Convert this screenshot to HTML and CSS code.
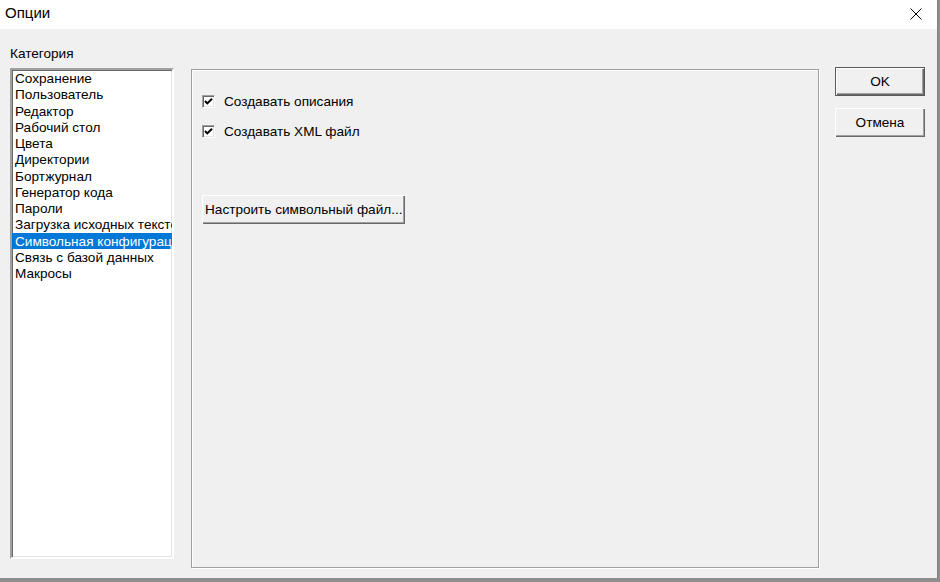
FILE: index.html
```html
<!DOCTYPE html>
<html lang="ru">
<head>
<meta charset="utf-8">
<title>Опции</title>
<link rel="stylesheet" href="styles.css">
</head>
<body>
<div class="window">
  <div class="titlebar">
    <span class="title">Опции</span>
    <button class="close" aria-label="Закрыть">
      <svg width="12" height="12" viewBox="0 0 12 12"><path d="M0.5 0.5 L11.5 11.5 M11.5 0.5 L0.5 11.5" stroke="#000" stroke-width="1" fill="none"/></svg>
    </button>
  </div>
  <div class="client">
    <div class="category">
      <div class="label">Категория</div>
      <ul class="listbox">
        <li>Сохранение</li>
        <li>Пользователь</li>
        <li>Редактор</li>
        <li>Рабочий стол</li>
        <li>Цвета</li>
        <li>Директории</li>
        <li>Бортжурнал</li>
        <li>Генератор кода</li>
        <li>Пароли</li>
        <li>Загрузка исходных текстов</li>
        <li class="selected">Символьная конфигурация</li>
        <li>Связь с базой данных</li>
        <li>Макросы</li>
      </ul>
    </div>
    <div class="group">
      <label class="check">
        <span class="box"><svg width="9" height="9" viewBox="0 0 9 9"><path d="M1 4 L3.3 6.4 L8 1.7" stroke="#000" stroke-width="2" fill="none"/></svg></span>
        <span>Создавать описания</span>
      </label>
      <label class="check check-second">
        <span class="box"><svg width="9" height="9" viewBox="0 0 9 9"><path d="M1 4 L3.3 6.4 L8 1.7" stroke="#000" stroke-width="2" fill="none"/></svg></span>
        <span>Создавать XML файл</span>
      </label>
      <button class="btn btn-wide">Настроить символьный файл...</button>
    </div>
    <div class="actions">
      <button class="btn btn-default">OK</button>
      <button class="btn">Отмена</button>
    </div>
  </div>
</div>
</body>
</html>
```

FILE: styles.css
```css
html, body {
  margin: 0;
  padding: 0;
}

body {
  width: 940px;
  height: 582px;
  overflow: hidden;
  background: #8e8e8e;
  font-family: "Liberation Sans", Arial, sans-serif;
  font-size: 13.6px;
  color: #000;
}

.window {
  width: 937px;
  height: 578px;
  background: #f0f0f0;
  border-right: 1px solid #7f7f7f;
  display: flex;
  flex-direction: column;
}

/* caption bar */
.titlebar {
  height: 29px;
  flex: none;
  background: #fff;
  display: flex;
  align-items: center;
  justify-content: space-between;
  padding: 0 15px 3px 5px;
  box-sizing: border-box;
}

.title {
  font-size: 15px;
  line-height: 18px;
}

.close {
  width: 12px;
  height: 12px;
  padding: 0;
  border: 0;
  background: transparent;
  display: block;
  margin-top: 2px;
}

.close svg {
  display: block;
}

/* dialog body */
.client {
  flex: 1;
  display: flex;
  align-items: flex-start;
  padding: 17px 0 0 10px;
}

.category {
  width: 164px;
  flex: none;
}

.label {
  line-height: 16px;
  height: 16px;
}

.listbox {
  list-style: none;
  margin: 6px 0 0;
  padding: 0;
  width: 164px;
  height: 491px;
  box-sizing: border-box;
  border: 2px solid;
  border-color: #a0a0a0 #fff #fff #a0a0a0;
  box-shadow: inset 1px 1px #696969, inset -1px -1px #e3e3e3;
  background: #fff;
  overflow: hidden;
}

.listbox li {
  height: 16.25px;
  line-height: 17px;
  padding-left: 3px;
  white-space: nowrap;
  overflow: hidden;
  text-overflow: clip;
}

.listbox li.selected {
  background: #0078d7;
  color: #fff;
}

/* options frame */
.group {
  width: 628px;
  height: 499px;
  flex: none;
  box-sizing: border-box;
  margin: 23px 0 0 17px;
  padding: 23px 0 0 10px;
  border: 1px solid #a0a0a0;
  box-shadow: inset 1px 1px #fff, 1px 1px #fff;
  display: flex;
  flex-direction: column;
  align-items: flex-start;
}

.check {
  display: flex;
  align-items: center;
  height: 16px;
  gap: 9px;
  white-space: nowrap;
}

.check-second {
  margin-top: 14px;
}

.box {
  width: 13px;
  height: 13px;
  box-sizing: border-box;
  border: 1px solid;
  border-color: #a0a0a0 #fff #fff #a0a0a0;
  box-shadow: inset 1px 1px #696969, inset -1px -1px #e3e3e3;
  background: #fff;
  display: flex;
  align-items: center;
  justify-content: center;
  flex: none;
}

.box svg {
  display: block;
}

/* push buttons */
.btn {
  font-family: "Liberation Sans", Arial, sans-serif;
  font-size: 13.6px;
  color: #000;
  background: #f0f0f0;
  border: 0;
  margin: 0;
  padding: 0;
  height: 29px;
  width: 90px;
  box-sizing: border-box;
  text-align: center;
  box-shadow: inset 1px 1px #fff, inset -1px -1px #696969, inset -2px -2px #a0a0a0;
  display: block;
}

.btn-wide {
  width: 203px;
  margin-top: 56px;
  text-align: left;
  padding-left: 3px;
  white-space: nowrap;
}

.btn-default {
  border: 1px solid #5a5a5a;
}

.actions {
  flex: none;
  margin: 21px 0 0 16px;
  display: flex;
  flex-direction: column;
  gap: 12px;
}
```
